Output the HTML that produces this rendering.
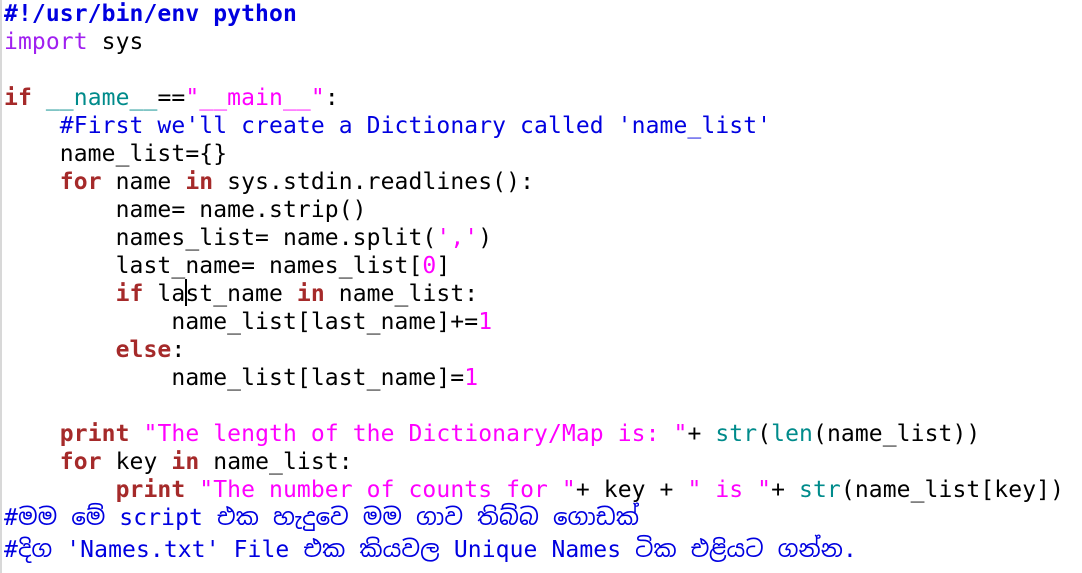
<!DOCTYPE html>
<html><head><meta charset="utf-8"><style>
html,body{margin:0;padding:0;background:#fff;width:1082px;height:573px;overflow:hidden}
body{border-left:2px solid #d8d8d8;box-sizing:border-box;position:relative}
pre{margin:0;padding:0 0 0 2px;font-family:"DejaVu Sans Mono","Liberation Mono","Noto Sans Sinhala",monospace;font-size:23px;letter-spacing:0.1px;line-height:28px;color:#000;position:absolute;top:0;left:0}
.c{color:#0000e0}
.sb{color:#0000e0;font-weight:bold}
.k{color:#a52a2a;font-weight:bold}
.p{color:#a020f0}
.t{color:#008b8b}
.s{color:#ff00ff}
.last{display:block;margin-top:4px}
#cur{position:absolute;left:183px;top:279px;width:2px;height:27px;background:#000}
</style></head><body><pre><span class="sb">#!/usr/bin/env python</span>
<span class="p">import</span> sys

<span class="k">if</span> <span class="t">__name__</span>==<span class="s">"__main__"</span>:
    <span class="c">#First we'll create a Dictionary called 'name_list'</span>
    name_list={}
    <span class="k">for</span> name <span class="k">in</span> sys.stdin.readlines():
        name= name.strip()
        names_list= name.split(<span class="s">','</span>)
        last_name= names_list[<span class="s">0</span>]
        <span class="k">if</span> last_name <span class="k">in</span> name_list:
            name_list[last_name]+=<span class="s">1</span>
        <span class="k">else</span>:
            name_list[last_name]=<span class="s">1</span>

    <span class="k">print</span> <span class="s">"The length of the Dictionary/Map is: "</span>+ <span class="t">str</span>(<span class="t">len</span>(name_list))
    <span class="k">for</span> key <span class="k">in</span> name_list:
        <span class="k">print</span> <span class="s">"The number of counts for "</span>+ key + <span class="s">" is "</span>+ <span class="t">str</span>(name_list[key])
<span class="c">#මම මේ script එක හැදුවෙ මම ගාව තිබ්බ ගොඩක්</span>
<span class="c last">#දිග 'Names.txt' File එක කියවල Unique Names ටික එළියට ගන්න.</span></pre><div id="cur"></div></body></html>
